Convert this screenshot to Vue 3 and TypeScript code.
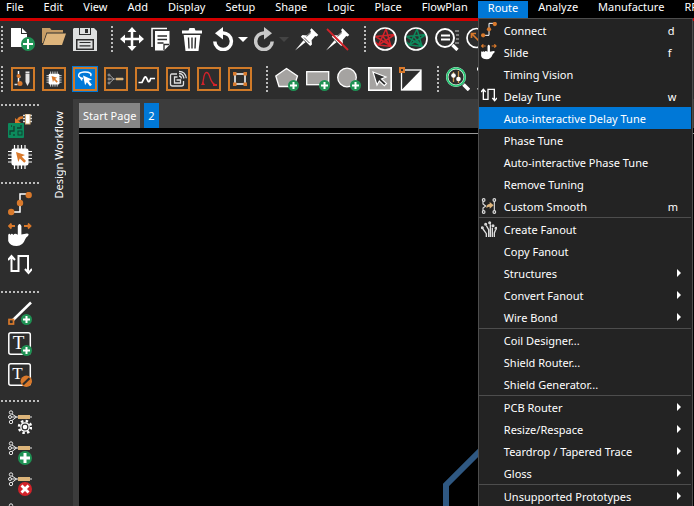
<script setup lang="ts">
interface MenuItem {
  label: string
  icon?: string
  key?: string
  submenu?: boolean
  active?: boolean
}

interface Tool {
  kind: 'tool' | 'grip'
  label?: string
  icon?: string
  caret?: 'on' | 'off'
  selected?: boolean
}

const grip: Tool = { kind: 'grip' }
const tool = (label: string, icon: string, extra: Partial<Tool> = {}): Tool => ({
  kind: 'tool',
  label,
  icon,
  ...extra,
})

const badgePlus = (x: number, y: number, r: number): string =>
  `<circle cx="${x}" cy="${y}" r="${r}" fill="#1f9254"/><path d="M${x - r + 2} ${y}h${2 * r - 4}M${x} ${y - r + 2}v${2 * r - 4}" stroke="#fff" stroke-width="2" fill="none"/>`

const box = (inner: string): string =>
  `<rect x="1" y="1" width="22" height="22" fill="none" stroke="#d07a28" stroke-width="2"/>${inner}`

const chip = `<path d="M6.500 0v24M10 0v24M13.500 0v24M17 0v24M0 6.500h24M0 10h24M0 13.500h24M0 17h24" stroke="#fff" stroke-width="1.200"/><rect x="3.500" y="3.500" width="17" height="17" rx="2" fill="#fff"/><path d="M8 7l9 3-3.300 1.600 4.300 4.400-1.800 1.800-4.400-4.300-1.500 3.500z" fill="#d9792b"/>`

const branch = `<g fill="none" stroke="#e8e8e8"><circle cx="3" cy="2.500" r="1.700"/><circle cx="2" cy="7" r="1.500"/><circle cx="3" cy="12" r="1.700"/><path d="M4 4l4.500 3L4 10.500M3.500 7H24"/></g><rect x="10" y="5" width="12" height="4" fill="#dcb47a"/>`

const pin = `<path d="M0 23.500l8.500-10.300 2 2z" fill="#fff"/><path d="M16.500 1.200l6.800 6.800-1.800 1.600-1.300-.6-3.600 4.300.4 4.200-1.800 1.600L5.800 9.800l1.700-1.700 4.100.3 4.300-3.700-.8-1.600z" fill="#fff"/><path d="M11.500 9.500l4.300-3.800M9 10.500l5.500 5.500" stroke="#2d2d2d" stroke-width=".8"/>`

const web = (c: string): string =>
  `<path d="M13 2L5.500 18M13 2l5 17.500M2.500 9.500L22 7.500 5.500 18 19 19.500 2.500 9.500M5.500 18l-3-3M9 8.500l9 11" fill="none" stroke="${c}" stroke-width="1.500"/><circle cx="12" cy="12" r="11" fill="none" stroke="#fff" stroke-width="1.700"/>`

const wave = `<path d="M3.500 18V3M0 6l3.500-4L7 6M3.500 17h7V2h9.500v15M17 15l3.500 4L24 15" fill="none" stroke="#fff" stroke-width="2"/>`
const route = `<path d="M3 20h9V2h9" fill="none" stroke="#fff" stroke-width="1.500"/><circle cx="3.200" cy="20" r="3.200" fill="#d9792b"/><circle cx="12" cy="11" r="3.200" fill="#d9792b"/><circle cx="20.700" cy="3" r="3.200" fill="#d9792b"/>`
const slide = `<path d="M7 3H1.500M3.500.500L1 3l2.500 2.500M16 3h6M20 .500L22.500 3 20 5.500" stroke="#d9792b" stroke-width="1.800" fill="none"/><path d="M9.800 3q1.700-4 3.600 0v8.500l5.500-1q3 .3.800 2.800-1.700 1.200-2.500 3-2.300 6.700-8.500 6.700-7 0-8.500-5v-6q1-2.500 2.400 0 1-2.500 2.800 0 1.200-2.500 4.400-.3z" fill="#fff"/>`

const icons: Record<string, string> = {
  file: `<path d="M0 1h10v6h6v13H0zM11 1l5 5h-5z" fill="#fff"/>${badgePlus(17, 17, 7)}`,
  folder: `<path d="M0 1h8l1.500 2H21v2.500H4.500L1 16H0z" fill="#c79d66"/><path d="M5 6.500h19L20 18H1z" fill="#deb57c"/>`,
  save: `<path d="M1 1h20l3 3v20H0V2z" fill="#dedfdf"/><path d="M6 1h12v7H6z" fill="#2d2d2d"/><path d="M7 1h10v6H7z" fill="#dedfdf"/><path d="M12 2h3v4h-3zM3 12h18v11H3z" fill="#2d2d2d"/><path d="M4.500 13.500h15v8h-15z" fill="#dedfdf"/><path d="M6.500 15.500h11M6.500 18.800h11" stroke="#2d2d2d" stroke-width="1.200"/>`,
  move: `<path d="M12 3v18M3 12h18" stroke="#fff" stroke-width="2.500"/><path d="M12 0l4.500 5h-9zM12 24l-4.500-5h9zM0 12l5-4.500v9zM24 12l-5 4.500v-9z" fill="#fff"/>`,
  copy: `<path d="M1 20V1.500h15" stroke="#fff" stroke-width="1.500" fill="none"/><path d="M4 4h14.500v14L13 23.500H4z" fill="#fff"/><path d="M6.500 9h9.500M6.500 12.500h9.500M6.500 16h6M13 23v-5.500h5" stroke="#2d2d2d" stroke-width="1.300" fill="none"/>`,
  trash: `<path d="M0 3.500h6.500L7.500 1h5l1 2.500H20v3H0z" fill="#fff"/><path d="M1.700 8h16.600L16.500 24h-13z" fill="#fff"/><path d="M6.500 10.500l.5 11M10 10.500v11M13.500 10.500l-.5 11" stroke="#2d2d2d" stroke-width="1.400"/>`,
  undo: `<path d="M1.800 14.500A8.300 8.300 0 1 0 9.500 6" fill="none" stroke="#fff" stroke-width="3.500"/><path d="M10 0v12.500L2 6.300z" fill="#fff"/>`,
  redo: `<path d="M18.200 14.500A8.300 8.300 0 1 1 10.500 6" fill="none" stroke="#c9c9c9" stroke-width="3.500"/><path d="M10 0v12.500l8-6.200z" fill="#c9c9c9"/>`,
  pin,
  unpin: `${pin}<path d="M1 2l21 21" stroke="#d2232a" stroke-width="1.800"/>`,
  webRed: web('#d2232a'),
  webGreen: web('#0c8a5c'),
  zoomList: `<circle cx="10" cy="11" r="9" fill="none" stroke="#fff" stroke-width="2"/><path d="M6 8.500h9M6 12.500h9" stroke="#fff" stroke-width="1.800"/><path d="M17.500 18l5 5" stroke="#fff" stroke-width="3.200"/><path d="M20 4h4M21 8h3M21 12h3M20 16h4" stroke="#c9c9c9"/>`,
  zoomFit: `<circle cx="10.500" cy="11" r="9.500" fill="none" stroke="#fff" stroke-width="1.700"/><path d="M6 7l9 9M5.500 11V6.500H10" stroke="#d9792b" stroke-width="1.700" fill="none"/>`,
  place: box(`<path d="M7.500 4v3M7.500 10h2M7.500 11v4" stroke="#fff" stroke-width="1.500"/><circle cx="7.500" cy="9" r="2" fill="#d9792b"/><path d="M3.500 17.500h3" stroke="#ddd" stroke-width="1.500"/><circle cx="9" cy="16.500" r="2.500" fill="#d9792b"/><path d="M14.500 7h4v8l-2 4-2-4zM14.500 4.500h4v2h-4z" fill="#e4e4e4"/>`),
  chipBox: box(`<g transform="translate(4.500 4.500) scale(.63)">${chip}</g>`),
  lasso: box(`<path d="M10 11.500C3.500 10.500 4.500 5.500 11 5c6-.4 8 2 6.500 4M7.500 11L9 13.500" fill="none" stroke="#fff" stroke-width="1.400"/><path d="M10 8.500l9 4-3.300 1.200 3.200 4-1.900 1.500-3.100-4-1.800 3z" fill="#fff"/>`),
  branchBox: box(`<g fill="none" stroke="#aaa" stroke-width=".9"><circle cx="5" cy="8" r="1"/><circle cx="5" cy="12" r="1"/><circle cx="5" cy="16" r="1"/><path d="M6 8.500l4 3.500-4 3.500M6 12h14"/></g><path d="M12 12h7" stroke="#dcb47a" stroke-width="2.500"/>`),
  waveBox: box(`<path d="M3.500 15.500H7l2.500-5q1-1.500 2 .5l1.500 3q.8 1.500 1.700 0l1-2.500H20" fill="none" stroke="#fff" stroke-width="1.700"/>`),
  signal: box(`<g fill="none" stroke="#ddd" stroke-width="1.300"><path d="M11 7H5.500Q4.500 7 4.500 9v8q0 2 2 2h9q2 0 2-2v-3"/><path d="M11.500 10H8.500v6h6v-3h-4"/><path d="M13 9q2 0 2.500 2.500M13 6.500q4 0 5 5M13 4.300q6.500 0 7.300 7"/></g>`),
  pulse: box(`<path d="M5.500 17C7 12 6.500 5.500 9.500 5.500c4.500 0 2.500 12 10 12.500" fill="none" stroke="#d2232a" stroke-width="1.300"/><path d="M6 14.500l2 3.500H4zM16 17h4v2h-4z" fill="#d2232a"/>`),
  frame: box(`<rect x="7" y="7" width="10" height="10" fill="none" stroke="#fff" stroke-width="1.500"/><path d="M5 5h3.500v3.500H5zM15.500 5H19v3.500h-3.500zM5 15.500h3.500V19H5zM15.500 15.500H19V19h-3.500z" fill="#d9792b"/>`),
  polygon: `<path d="M11.500 1.500l11 7.500-3.500 10.500H4L.8 9z" fill="#a5a3a1" stroke="#fff" stroke-width="1.300"/>${badgePlus(18.5, 18.5, 5.5)}`,
  rect: `<rect x=".7" y="4.700" width="22" height="13" fill="#a5a3a1" stroke="#fff" stroke-width="1.300"/>${badgePlus(18.5, 18.5, 5.5)}`,
  circle: `<circle cx="10" cy="10.500" r="9.300" fill="#a5a3a1" stroke="#fff" stroke-width="1.300"/>${badgePlus(18.5, 18.5, 5.5)}`,
  select: `<rect x=".8" y=".8" width="22.400" height="22.400" fill="#a5a3a1" stroke="#fff" stroke-width="1.600"/><path d="M5 5l13 5-4.500 2 5 4.500-2.200 2.200-5-4.700-2.300 4z" fill="#2d2d2d" stroke="#fff" stroke-width="1.200"/>`,
  shade: `<rect x="2.500" y="3" width="19.500" height="20" fill="none" stroke="#fff" stroke-width="1.300"/><path d="M22 3v20H2.500z" fill="#fff"/><rect x="1" y="1" width="4" height="4" fill="#2d2d2d" stroke="#d9792b" stroke-width="2"/>`,
  inspect: `<circle cx="10" cy="10" r="8.800" fill="none" stroke="#d8fbe6" stroke-width="2.500"/><circle cx="10" cy="10" r="9" fill="none" stroke="#25c573" stroke-width="1.600"/><path d="M7.500 5v10M12.500 4v12" stroke="#c9974e" stroke-width="1.300"/><circle cx="7.500" cy="8.500" r="2.300" fill="#fff"/><circle cx="12.500" cy="12" r="2.300" fill="#fff"/><path d="M17.500 17.500l5.500 5.500" stroke="#fff" stroke-width="3.500"/>`,
  corner: `<path d="M0 2h6M1 23l5-4" stroke="#fff" stroke-width="3"/>`,
  board: `<rect x="0" y="9" width="16" height="15" rx="1" fill="#0c8a5c"/><path d="M2 21v-4h4v-5M13 11v3H9M3 12h1M6 22v-2" stroke="#123f31" stroke-width="1.300" fill="none"/><rect x="10" y="17" width="4" height="4" fill="none" stroke="#123f31"/><path d="M15 1.500h9M15 4.500h9M15 7.500h9" stroke="#ddd" stroke-width="1.300"/><rect x="17.500" y="0" width="4.500" height="10" fill="#fff" stroke="#dcb47a"/><path d="M15 3.500q-4-.5-5 3" stroke="#d9792b" stroke-width="2.500" fill="none"/><path d="M7 4v5h6z" fill="#d9792b"/>`,
  chip,
  route,
  slide,
  wave,
  line: `<path d="M4 20L23 1.500" stroke="#fff" stroke-width="2.500"/><rect x="1" y="18.500" width="4.500" height="4.500" fill="#2d2d2d" stroke="#d9792b" stroke-width="1.700"/>${badgePlus(18.5, 18.5, 5.5)}`,
  text: `<rect x=".8" y=".8" width="21.500" height="21.500" rx="2" fill="none" stroke="#fff" stroke-width="1.500"/><text x="10.500" y="17" text-anchor="middle" font-family="Liberation Serif, serif" font-size="19" fill="#fff">T</text>${badgePlus(18.5, 18.5, 5.5)}`,
  textEdit: `<rect x=".8" y=".8" width="21.500" height="21.500" rx="2" fill="none" stroke="#fff" stroke-width="1.500"/><text x="9.500" y="16" text-anchor="middle" font-family="Liberation Serif, serif" font-size="17" fill="#fff">T</text><circle cx="18.300" cy="18.300" r="5.700" fill="#d9792b"/><path d="M15 21.500l6.500-6.300" stroke="#2d2d2d" stroke-width="2.200"/>`,
  branchGear: `${branch}<circle cx="17" cy="17" r="6" fill="none" stroke="#fff" stroke-width="2.500" stroke-dasharray="2.400 2.300"/><circle cx="17" cy="17" r="4.800" fill="#fff"/><circle cx="17" cy="17" r="2.900" fill="none" stroke="#2d2d2d" stroke-width="1.200"/>`,
  branchAdd: `${branch}<circle cx="17" cy="17" r="7" fill="#1f9254"/><path d="M12 17h10M17 12v10" stroke="#fff" stroke-width="3"/>`,
  branchDelete: `${branch}<circle cx="17" cy="17" r="7" fill="#d2232a"/><path d="M13.500 13.500l7 7M20.500 13.500l-7 7" stroke="#fff" stroke-width="2.800"/>`,
  branch,
  smooth: `<g fill="none" stroke="#ddd" stroke-width="1.700"><circle cx="4" cy="3" r="2"/><circle cx="4" cy="21" r="2"/><path d="M3 5v4l4 3-4 3v4"/><circle cx="20" cy="3" r="2"/><circle cx="20" cy="21" r="2"/><path d="M20 5v14"/></g><path d="M8 15q0-6 5-6V6l6 5-6 5v-3q-2 0-5 2z" fill="#deb57c"/>`,
  fanout: `<g fill="none" stroke="#ddd" stroke-width="2"><path d="M8 24v-5l-5-7M11.500 24V13L8 7M14 24V5M17 24V10M20 24v-6l2-5"/><circle cx="2" cy="10" r="1.300"/><circle cx="7" cy="5" r="1.300"/><circle cx="13" cy="2.500" r="1.300"/><circle cx="18" cy="7" r="1.300"/><circle cx="22.500" cy="11" r="1.300"/></g>`,
}

const menusBefore = ['File', 'Edit', 'View', 'Add', 'Display', 'Setup', 'Shape', 'Logic', 'Place', 'FlowPlan']
const menusAfter = ['Analyze', 'Manufacture', 'RF']

const routeMenu: MenuItem[][] = [
  [
    { label: 'Connect', icon: 'route', key: 'd' },
    { label: 'Slide', icon: 'slide', key: 'f' },
    { label: 'Timing Vision' },
    { label: 'Delay Tune', icon: 'wave', key: 'w' },
    { label: 'Auto-interactive Delay Tune', active: true },
    { label: 'Phase Tune' },
    { label: 'Auto-interactive Phase Tune' },
    { label: 'Remove Tuning' },
    { label: 'Custom Smooth', icon: 'smooth', key: 'm' },
  ],
  [
    { label: 'Create Fanout', icon: 'fanout' },
    { label: 'Copy Fanout' },
    { label: 'Structures', submenu: true },
    { label: 'Convert Fanout', submenu: true },
    { label: 'Wire Bond', submenu: true },
  ],
  [{ label: 'Coil Designer...' }, { label: 'Shield Router...' }, { label: 'Shield Generator...' }],
  [
    { label: 'PCB Router', submenu: true },
    { label: 'Resize/Respace', submenu: true },
    { label: 'Teardrop / Tapered Trace', submenu: true },
    { label: 'Gloss', submenu: true },
  ],
  [{ label: 'Unsupported Prototypes', submenu: true }],
]

const toolbars: Tool[][] = [
  [
    grip,
    tool('New', 'file'),
    tool('Open', 'folder'),
    tool('Save', 'save'),
    grip,
    tool('Move', 'move'),
    tool('Copy', 'copy'),
    tool('Delete', 'trash'),
    tool('Undo', 'undo', { caret: 'on' }),
    tool('Redo', 'redo', { caret: 'off' }),
    tool('Fix', 'pin'),
    tool('Unfix', 'unpin'),
    grip,
    tool('Unrats All', 'webRed'),
    tool('Rats All', 'webGreen'),
    tool('Zoom Points', 'zoomList'),
    tool('Zoom Fit', 'zoomFit'),
  ],
  [
    grip,
    tool('General Edit', 'place'),
    tool('Placement Edit', 'chipBox'),
    tool('Etch Edit', 'lasso', { selected: true }),
    tool('Flow Planning', 'branchBox'),
    tool('Signal Integrity', 'waveBox'),
    tool('RF Edit', 'signal'),
    tool('Pulse', 'pulse'),
    tool('Shape Edit', 'frame'),
    grip,
    tool('Add Polygon', 'polygon'),
    tool('Add Rectangle', 'rect'),
    tool('Add Circle', 'circle'),
    tool('Select Shape', 'select'),
    tool('Shadow Mode', 'shade'),
    grip,
    tool('Inspect', 'inspect'),
    tool('More', 'corner'),
  ],
]

const sideTools: Tool[] = [
  grip,
  tool('Place Manual', 'board'),
  tool('Place Component', 'chip'),
  grip,
  tool('Connect', 'route'),
  tool('Slide', 'slide'),
  tool('Delay Tune', 'wave'),
  grip,
  tool('Add Line', 'line'),
  tool('Add Text', 'text'),
  tool('Edit Text', 'textEdit'),
  grip,
  tool('Bundle Settings', 'branchGear'),
  tool('Add Bundle', 'branchAdd'),
  tool('Delete Bundle', 'branchDelete'),
  tool('Bundle', 'branch'),
]
</script>

<template>
  <div class="app">
    <nav class="menubar">
      <button v-for="name in menusBefore" :key="name" type="button" class="menu-title">{{ name }}</button>
      <div class="menu-host">
        <button type="button" class="menu-title open" aria-expanded="true">Route</button>
        <div class="dropdown" role="menu">
          <div v-for="(group, g) in routeMenu" :key="g" class="group" role="group">
            <button
              v-for="item in group"
              :key="item.label"
              type="button"
              role="menuitem"
              class="item"
              :class="{ active: item.active }"
            >
              <span class="item-icon">
                <svg v-if="item.icon" viewBox="0 0 24 24" width="16" height="16" v-html="icons[item.icon]" />
              </span>
              <span class="item-text">{{ item.label }}</span>
              <span v-if="item.key" class="item-text">{{ item.key }}</span>
              <svg v-if="item.submenu" class="arrow" viewBox="0 0 4 8" width="4" height="8">
                <path d="M0 0l4 4-4 4z" fill="#fff" />
              </svg>
            </button>
          </div>
        </div>
      </div>
      <button v-for="name in menusAfter" :key="name" type="button" class="menu-title">{{ name }}</button>
    </nav>

    <header class="toolbars">
      <div v-for="(bar, b) in toolbars" :key="b" class="toolbar">
        <template v-for="(t, i) in bar" :key="i">
          <span v-if="t.kind === 'grip'" class="grip" />
          <button v-else type="button" class="tool" :class="{ selected: t.selected }" :aria-label="t.label">
            <svg viewBox="0 0 24 24" width="24" height="24" v-html="icons[t.icon!]" />
            <svg v-if="t.caret" class="caret" viewBox="0 0 10 5" width="10" height="5">
              <path d="M0 0h10L5 5z" :fill="t.caret === 'on' ? '#fff' : '#444'" />
            </svg>
          </button>
        </template>
      </div>
    </header>

    <div class="body">
      <aside class="side-tools">
        <template v-for="(t, i) in sideTools" :key="i">
          <span v-if="t.kind === 'grip'" class="grip" />
          <button v-else type="button" class="tool" :aria-label="t.label">
            <svg viewBox="0 0 24 24" width="24" height="24" v-html="icons[t.icon!]" />
          </button>
        </template>
      </aside>
      <aside class="panel-tabs">
        <button type="button" class="panel-tab">Design Workflow</button>
      </aside>
      <main class="workspace">
        <div class="tabs">
          <button type="button" class="tab">Start Page</button>
          <button type="button" class="tab current">2</button>
        </div>
        <div class="canvas">
          <svg class="traces" aria-hidden="true">
            <path d="M418 300L367 351V800" fill="none" stroke="#2f5882" stroke-width="6" />
          </svg>
        </div>
      </main>
    </div>
  </div>
</template>

<style>
body {
  margin: 0;
  background: #2d2d2d;
}
</style>

<style scoped>
.app {
  display: flex;
  flex-direction: column;
  height: 100vh;
  overflow: hidden;
  background: #2d2d2d;
  color: #fff;
  font: 11px/16px "Noto Sans", "Open Sans", sans-serif;
}

button {
  margin: 0;
  padding: 0;
  border: 0;
  background: none;
  color: inherit;
  font: inherit;
  text-align: left;
  white-space: nowrap;
}

svg {
  display: block;
  flex: none;
}

.menubar {
  display: flex;
  flex: none;
  height: 18px;
  padding-left: 6px;
  background: #000;
  border-bottom: 3px solid #d40000;
}

.menu-title {
  flex: none;
  height: 18px;
  padding: 0 10px 4px;
  line-height: 14px;
}

.menu-title:first-child {
  padding-left: 0;
}

.menu-title.open {
  padding-left: 10px;
  background: #0078d7;
}

.menu-host {
  position: relative;
  flex: none;
}

.dropdown {
  position: absolute;
  z-index: 10;
  top: 18px;
  left: 0;
  width: 212px;
  padding-right: 1px;
  border: 1px solid #4d4d4d;
  background: #232323;
}

.group + .group {
  border-top: 1px solid #4d4d4d;
}

.item {
  display: grid;
  grid-template-columns: 25px 1fr 23px;
  align-items: center;
  width: 100%;
  height: 22px;
}

.item.active {
  background: #0078d7;
}

.item-icon {
  padding-left: 2px;
}

.item-text {
  padding-top: 2px;
}

.arrow {
  margin-left: 9px;
}

.toolbars {
  display: flex;
  flex: none;
  flex-direction: column;
  gap: 16px;
  padding: 6px 0 8px;
}

.toolbar {
  display: flex;
  gap: 7px;
  height: 24px;
}

.grip {
  flex: none;
  width: 9px;
  margin: -1px 0;
  background: repeating-linear-gradient(to bottom, #bbb 0 2px, transparent 2px 4px) right / 2px 100% no-repeat;
}

.grip:first-child {
  width: 4px;
  background-position: 1px 0;
}

.tool {
  display: flex;
  flex: none;
  align-items: center;
  gap: 1px;
}

.caret {
  margin-right: -1px;
}

.selected {
  background: #0078d7;
  outline: 1px solid #0078d7;
}

.body {
  display: flex;
  flex: 1;
  min-height: 0;
}

.side-tools {
  display: flex;
  flex: none;
  flex-direction: column;
  gap: 7px;
  width: 32px;
  padding: 5px 8px 0;
  overflow: hidden;
}

.side-tools .tool {
  height: 24px;
}

.side-tools .grip,
.side-tools .grip:first-child {
  width: 38px;
  height: 9px;
  margin: 0 -7px;
  background: repeating-linear-gradient(to right, #bbb 0 2px, transparent 2px 4px) 0 6px / 100% 2px no-repeat;
}

.side-tools .grip:first-child {
  height: 3px;
  background-position: 0 0;
}

.panel-tabs {
  flex: none;
  width: 25px;
}

.panel-tab {
  width: 22px;
  padding-bottom: 12px;
  line-height: 22px;
  writing-mode: vertical-rl;
  transform: rotate(180deg);
}

.workspace {
  display: flex;
  flex: 1;
  flex-direction: column;
  min-width: 0;
  border-left: 6px solid #3c3c3c;
  background: #000;
}

.tabs {
  display: flex;
  flex: none;
  gap: 4px;
  padding-top: 4px;
  background: #3c3c3c;
}

.tab {
  height: 25px;
  padding: 0 4px;
  background: #868686;
}

.tab.current {
  background: #0078d7;
}

.canvas {
  position: relative;
  flex: 1;
  margin-top: 5px;
  overflow: hidden;
  border-top: 1px solid #999;
}

.traces {
  position: absolute;
  inset: 0;
  width: 100%;
  height: 100%;
}
</style>
